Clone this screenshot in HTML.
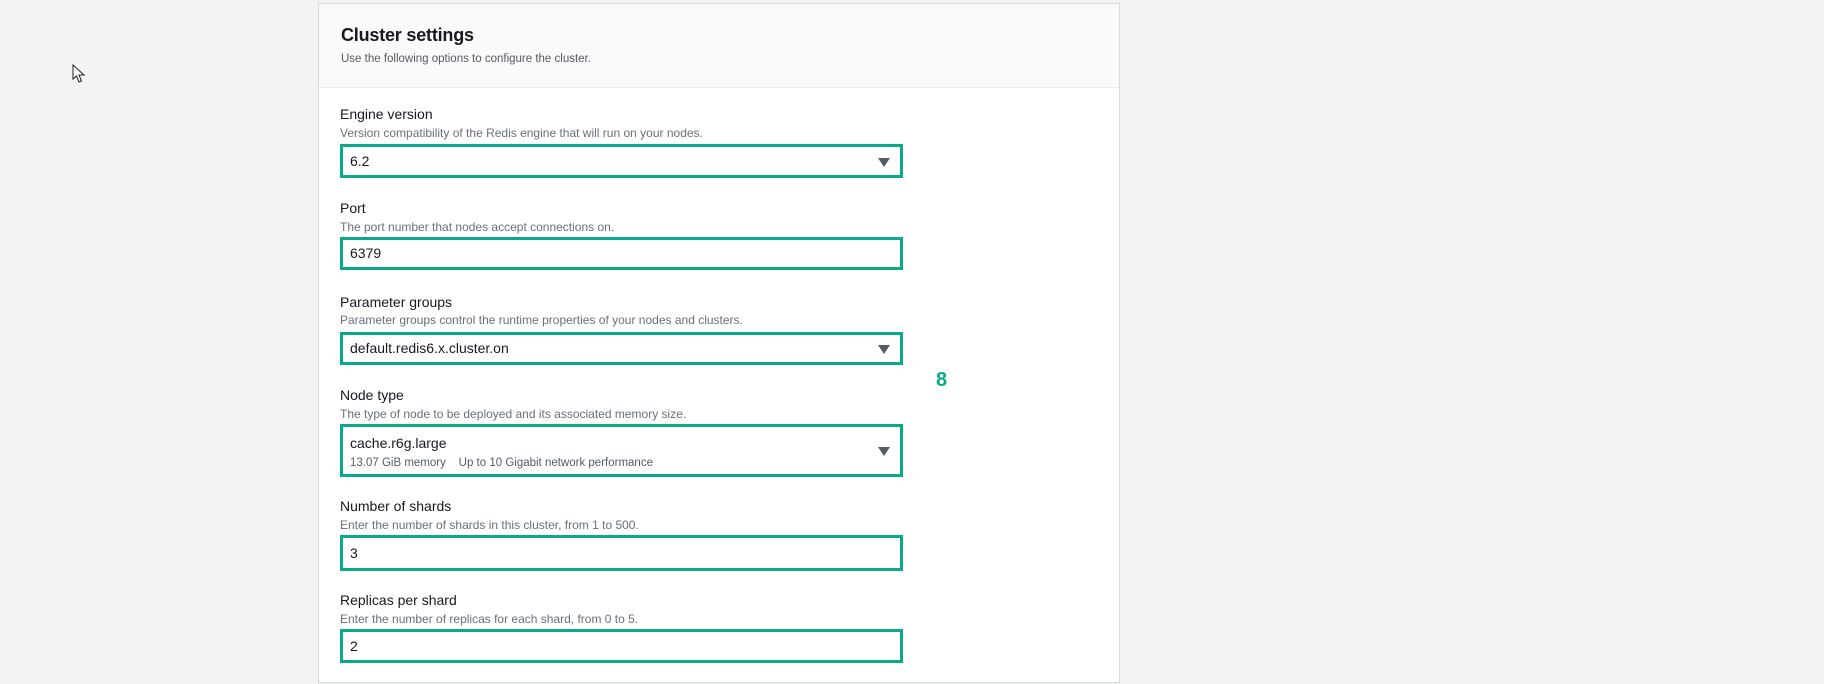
<!DOCTYPE html>
<html><head><style>
body{margin:0;width:1824px;height:684px;background:#f2f3f3;font-family:"Liberation Sans",sans-serif;position:relative;overflow:hidden;color:#16191f}
.card{position:absolute;left:318px;top:3px;width:802px;height:680px;background:#fff;border:1px solid #d5dbdb;box-sizing:border-box}
.hdr{position:absolute;left:0;top:0;right:0;height:83px;background:#fafafa;border-bottom:1px solid #eaeded}
.t{position:absolute;left:22px;top:21px;font-size:18px;font-weight:bold;letter-spacing:-0.2px}
.s{position:absolute;left:22px;top:49px;font-size:11.5px;color:#545b64}
.lab{position:absolute;left:340px;font-size:14px}
.d{position:absolute;left:340px;font-size:12px;color:#687078}
.box{position:absolute;left:340px;width:563px;border:3px solid #0aa98a;box-sizing:border-box;font-size:14px;padding-left:7px}
.arr{position:absolute;right:10px;width:0;height:0;border-left:6px solid transparent;border-right:6px solid transparent;border-top:9px solid #545b64}
</style></head><body>
<svg style="position:absolute;left:72px;top:64px" width="14" height="20" viewBox="0 0 14 20"><path d="M1 1 L1 15 L4.5 12 L7 18 L9.5 17 L7 11 L12 11 Z" fill="#fff" stroke="#222" stroke-width="1"/></svg>
<div class="card"><div class="hdr"><div class="t">Cluster settings</div><div class="s">Use the following options to configure the cluster.</div></div></div>

<div class="lab" style="top:106px">Engine version</div>
<div class="d" style="top:126px">Version compatibility of the Redis engine that will run on your nodes.</div>
<div class="box" style="top:144px;height:34px;line-height:28px">6.2<div class="arr" style="top:11px"></div></div>

<div class="lab" style="top:200px">Port</div>
<div class="d" style="top:220px">The port number that nodes accept connections on.</div>
<div class="box" style="top:237px;height:33px;line-height:27px">6379</div>

<div class="lab" style="top:294px">Parameter groups</div>
<div class="d" style="top:313px">Parameter groups control the runtime properties of your nodes and clusters.</div>
<div class="box" style="top:332px;height:33px;line-height:27px">default.redis6.x.cluster.on<div class="arr" style="top:10px"></div></div>

<div style="position:absolute;left:936px;top:369px;font-size:20px;font-weight:bold;color:#0aa98a">8</div>

<div class="lab" style="top:387px">Node type</div>
<div class="d" style="top:407px">The type of node to be deployed and its associated memory size.</div>
<div class="box" style="top:424px;height:53px"><div style="position:absolute;left:7px;top:8px">cache.r6g.large</div><div style="position:absolute;left:7px;top:30px;font-size:11.5px;color:#545b64;white-space:nowrap">13.07 GiB memory &nbsp;&nbsp;&nbsp;Up to 10 Gigabit network performance</div><div class="arr" style="top:20px"></div></div>

<div class="lab" style="top:498px">Number of shards</div>
<div class="d" style="top:518px">Enter the number of shards in this cluster, from 1 to 500.</div>
<div class="box" style="top:535px;height:36px;line-height:30px">3</div>

<div class="lab" style="top:592px">Replicas per shard</div>
<div class="d" style="top:612px">Enter the number of replicas for each shard, from 0 to 5.</div>
<div class="box" style="top:629px;height:34px;line-height:28px">2</div>
</body></html>
